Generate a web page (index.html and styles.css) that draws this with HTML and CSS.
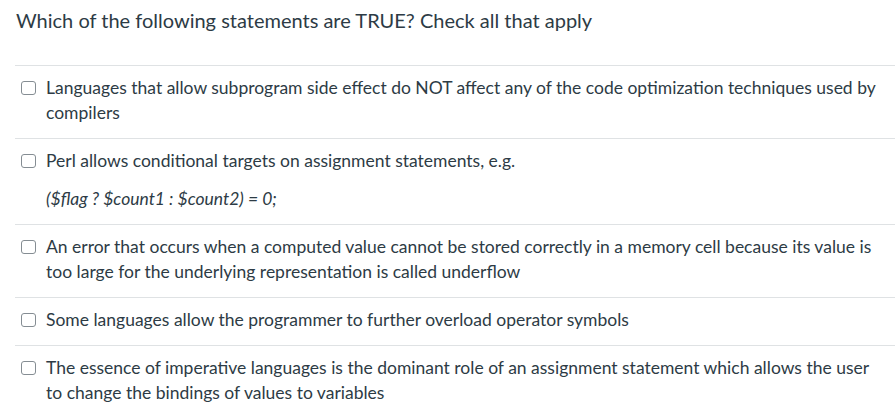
FILE: index.html
```
<!DOCTYPE html>
<html>
<head>
<meta charset="utf-8">
<link rel="stylesheet" href="styles.css">
</head>
<body>
<div class="question">
  <div class="q-text">Which of the following statements are TRUE? Check all that apply</div>
  <div class="answers">
    <label class="answer">
      <span class="box"></span>
      <span class="a-text">Languages that allow subprogram side effect do NOT affect any of the code optimization techniques used by compilers</span>
    </label>
    <label class="answer">
      <span class="box"></span>
      <span class="a-text">Perl allows conditional targets on assignment statements, e.g.
        <span class="code">($flag ? $count1 : $count2) = 0;</span>
      </span>
    </label>
    <label class="answer">
      <span class="box"></span>
      <span class="a-text">An error that occurs when a computed value cannot be stored correctly in a memory cell because its value is too large for the underlying representation is called underflow</span>
    </label>
    <label class="answer">
      <span class="box"></span>
      <span class="a-text">Some languages allow the programmer to further overload operator symbols</span>
    </label>
    <label class="answer">
      <span class="box"></span>
      <span class="a-text">The essence of imperative languages is the dominant role of an assignment statement which allows the user to change the bindings of values to variables</span>
    </label>
  </div>
</div>
</body>
</html>
```
FILE: styles.css
```
html, body {
  margin: 0;
  padding: 0;
  background: #fff;
}
body {
  font-family: Lato, "Open Sans", sans-serif;
  color: #2d3b45;
}
.question {
  padding-left: 15px;
}
.q-text {
  font-size: 20px;
  line-height: 26px;
  padding: 7px 0 0 1px;
  height: 66px;
  box-sizing: border-box;
  border-bottom: 1px solid #dfe2e4;
}
.answer {
  display: flex;
  align-items: flex-start;
  gap: 10px;
  padding: 9px 0 13px 6px;
  border-bottom: 1px solid #dfe2e4;
  font-size: 17.5px;
  line-height: 25px;
}
.answer:last-child {
  border-bottom: none;
}
.box {
  flex: none;
  width: 13px;
  height: 12px;
  border: 1px solid #858d93;
  border-radius: 3px;
  margin-top: 6px;
  background: #fff;
}
.a-text {
  flex: 1;
  padding-right: 13px;
}
.code {
  display: block;
  font-style: italic;
  margin-top: 13px;
}
```
